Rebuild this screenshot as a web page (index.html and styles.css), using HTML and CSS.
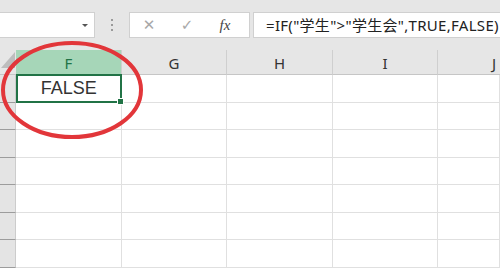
FILE: index.html
```html
<!DOCTYPE html>
<html>
<head>
  <meta charset="UTF-8">
  <title>IF</title>
  <link rel="stylesheet" href="styles.css">
</head>
<body>
<div class="toolbar">
  <div class="namebox"><span class="arrow"></span></div>
  <div class="grip"><i></i><i></i><i></i></div>
  <div class="fxbox">
    <span class="btn">&#x2715;</span>
    <span class="btn">&#x2713;</span>
    <span class="fx">fx</span>
  </div>
  <div class="formula">=IF("学生"&gt;"学生会",TRUE,FALSE)</div>
</div>

<div class="sheet">
  <div class="corner"><span class="tri"></span></div>
  <div class="colhead active">F</div>
  <div class="colhead">G</div>
  <div class="colhead">H</div>
  <div class="colhead">I</div>
  <div class="colhead last">J</div>

  <div class="rowhead"></div>
  <div class="cell selected">FALSE<span class="handle"></span></div>
  <div class="cell"></div><div class="cell"></div><div class="cell"></div><div class="cell"></div>

  <div class="rowhead"></div>
  <div class="cell"></div><div class="cell"></div><div class="cell"></div><div class="cell"></div><div class="cell"></div>
  <div class="rowhead"></div>
  <div class="cell"></div><div class="cell"></div><div class="cell"></div><div class="cell"></div><div class="cell"></div>
  <div class="rowhead"></div>
  <div class="cell"></div><div class="cell"></div><div class="cell"></div><div class="cell"></div><div class="cell"></div>
  <div class="rowhead"></div>
  <div class="cell"></div><div class="cell"></div><div class="cell"></div><div class="cell"></div><div class="cell"></div>
  <div class="rowhead"></div>
  <div class="cell"></div><div class="cell"></div><div class="cell"></div><div class="cell"></div><div class="cell"></div>
  <div class="rowhead"></div>
  <div class="cell"></div><div class="cell"></div><div class="cell"></div><div class="cell"></div><div class="cell"></div>
</div>

<svg class="circle" width="500" height="272" viewBox="0 0 500 272">
  <ellipse cx="72" cy="90" rx="69" ry="47" fill="none" stroke="#e2363a" stroke-width="4"/>
</svg>
</body>
</html>
```

FILE: styles.css
```css
body {
  margin: 0;
  width: 500px;
  height: 272px;
  overflow: hidden;
  background: #ffffff;
  font-family: "Noto Sans", "Open Sans", sans-serif;
  position: relative;
}

.toolbar {
  height: 50px;
  box-sizing: border-box;
  padding-top: 12px;
  background: #e6e6e6;
  display: flex;
  align-items: flex-start;
}

.namebox {
  width: 95px;
  height: 26px;
  box-sizing: border-box;
  background: #ffffff;
  border: 1px solid #d0d0d0;
  border-left: none;
  position: relative;
}

.namebox .arrow {
  position: absolute;
  left: 82px;
  top: 11px;
  border-left: 3px solid transparent;
  border-right: 3px solid transparent;
  border-top: 3px solid #555555;
}

.grip {
  width: 34px;
  height: 26px;
  display: flex;
  flex-direction: column;
  align-items: center;
  justify-content: center;
  gap: 3px;
}

.grip i {
  width: 2px;
  height: 2px;
  background: #9a9a9a;
}

.fxbox {
  width: 121px;
  height: 26px;
  box-sizing: border-box;
  background: #ffffff;
  border: 1px solid #d0d0d0;
  display: flex;
  align-items: center;
}

.fxbox .btn {
  width: 38px;
  text-align: center;
  color: #a8a8a8;
  font-size: 15px;
  font-family: "DejaVu Sans", sans-serif;
}

.fxbox .fx {
  width: 38px;
  text-align: center;
  color: #444444;
  font-family: "Liberation Serif", serif;
  font-style: italic;
  font-size: 15px;
}

.formula {
  margin-left: 3px;
  flex: 1;
  height: 26px;
  box-sizing: border-box;
  background: #ffffff;
  border: 1px solid #d0d0d0;
  border-right: none;
  padding-left: 12px;
  font-size: 15px;
  letter-spacing: 0.3px;
  line-height: 24px;
  color: #222222;
  white-space: nowrap;
  overflow: hidden;
  font-family: "Noto Sans", "Noto Sans CJK SC", sans-serif;
}

.sheet {
  display: grid;
  grid-template-columns: 16px repeat(4, 105.6px) 1fr;
  grid-template-rows: 25px repeat(7, 27.5px);
}

.corner {
  background: #e6e6e6;
  position: relative;
  border-bottom: 1px solid #c6c6c6;
}

.corner .tri {
  position: absolute;
  right: 1px;
  bottom: 6px;
  border-left: 14px solid transparent;
  border-bottom: 16px solid #bdbdbd;
}

.colhead {
  background: #e6e6e6;
  border-right: 1px solid #cfcfcf;
  border-bottom: 1px solid #c6c6c6;
  text-align: center;
  font-size: 15px;
  line-height: 26px;
  color: #333333;
}

.colhead.active {
  background: #a6d6b8;
  color: #217346;
  border-bottom: 1px solid #a6d6b8;
}

.colhead.last {
  text-align: right;
  padding-right: 4px;
  border-right: none;
}

.rowhead {
  background: #e4e4e4;
  border-right: 1px solid #cccccc;
  border-bottom: 1px solid #9c9c9c;
}

.cell {
  border-right: 1px solid #e0e0e0;
  border-bottom: 1px solid #e0e0e0;
}

.cell.selected {
  position: relative;
  margin: -1px 0 0 0;
  border: 2px solid #217346;
  text-align: center;
  font-family: "Liberation Sans", Arial, sans-serif;
  font-size: 18px;
  line-height: 25px;
  color: #333333;
}

.cell.selected .handle {
  position: absolute;
  right: -4px;
  bottom: -4px;
  width: 5px;
  height: 5px;
  background: #217346;
  border: 1px solid #ffffff;
}

.circle {
  position: absolute;
  left: 0;
  top: 0;
  pointer-events: none;
}
```
